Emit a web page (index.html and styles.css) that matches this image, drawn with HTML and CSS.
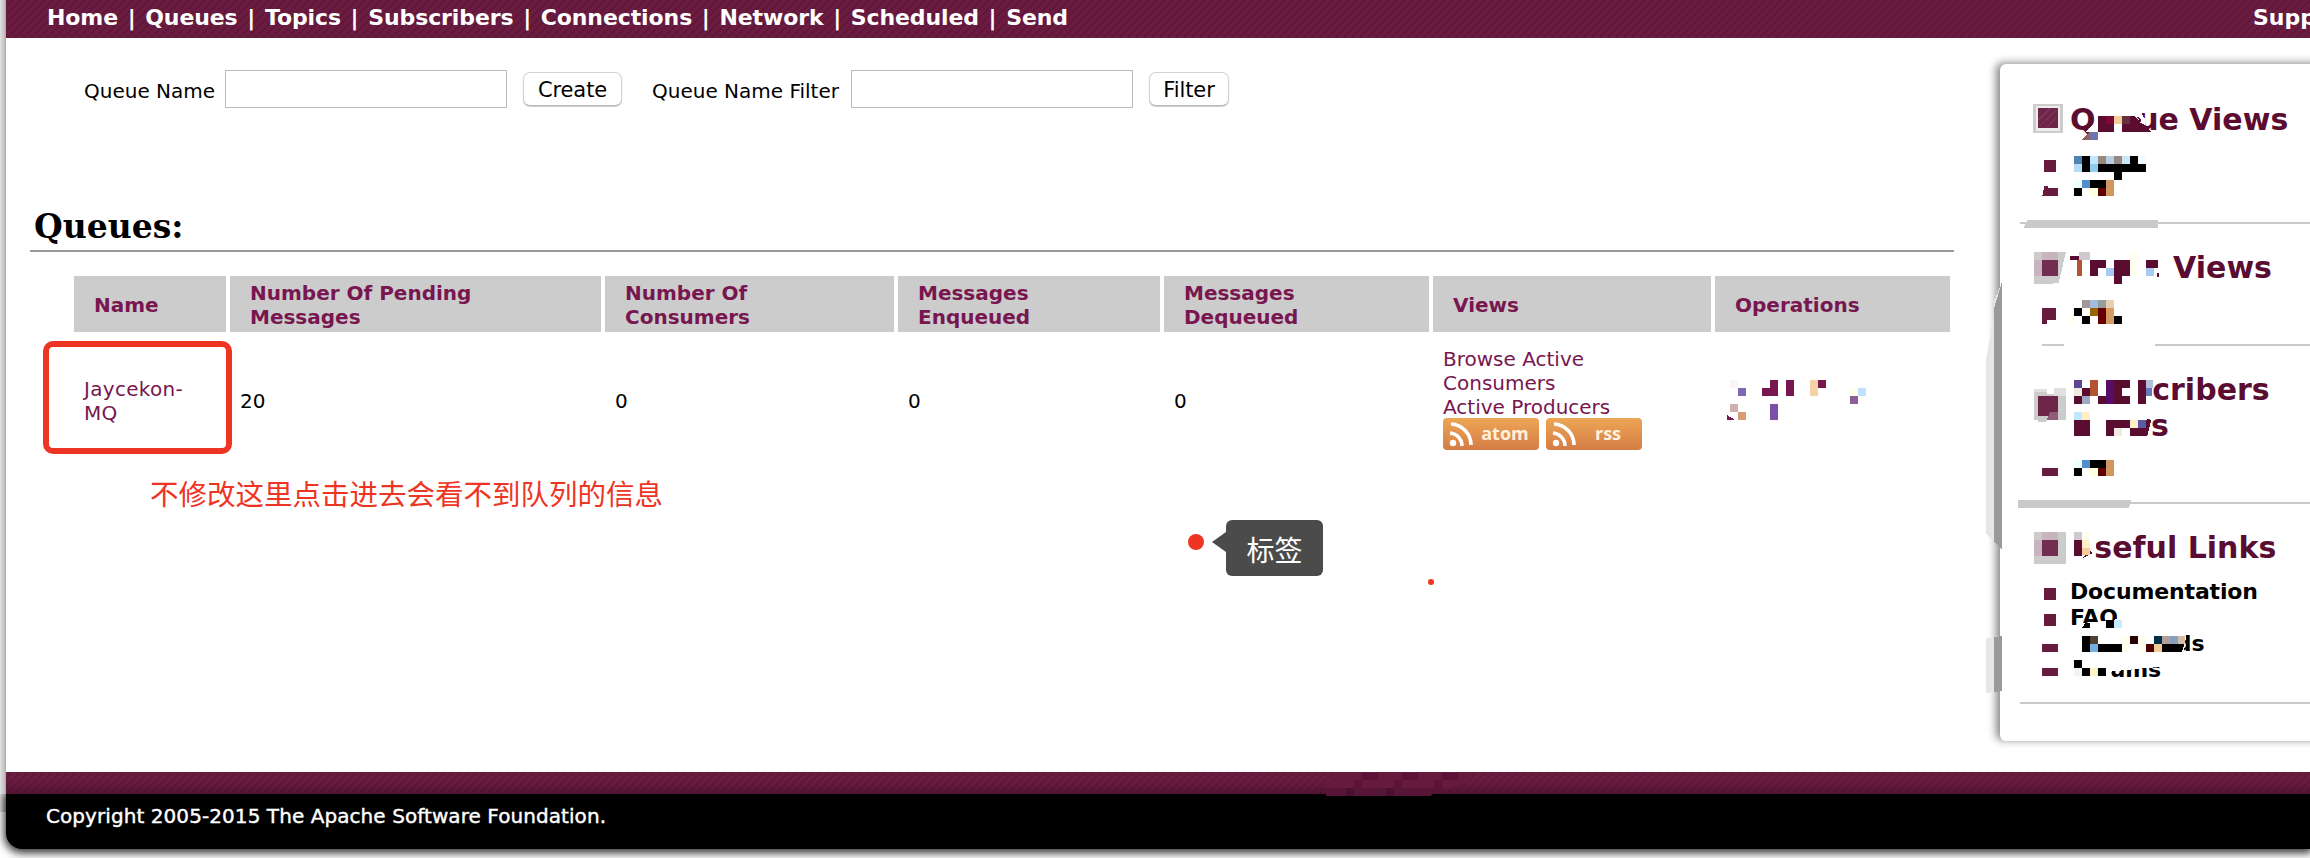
FILE: index.html
```html
<!DOCTYPE html>
<html lang="en">
<head>
  <meta charset="UTF-8" />
  <title>Queues</title>
  <link rel="stylesheet" href="styles.css">
</head>
<body>
  <div class="page">
    <div class="topbar stripes">
      <div class="nav"><a>Home</a> | <a>Queues</a> | <a>Topics</a> | <a>Subscribers</a> | <a>Connections</a> | <a>Network</a> | <a>Scheduled</a> | <a>Send</a></div>
      <div class="support">Support</div>
    </div>

    <div class="content">
      <div class="main">
        <div class="forms">
          <label class="lbl-name">Queue Name</label>
          <input type="text">
          <button class="btn-create">Create</button>
          <label class="lbl-filter">Queue Name Filter</label>
          <input type="text">
          <button class="btn-filter">Filter</button>
        </div>

        <h2>Queues:</h2>

        <div class="queues">
          <div class="th">Name</div>
          <div class="th">Number Of Pending<br>Messages</div>
          <div class="th">Number Of<br>Consumers</div>
          <div class="th">Messages<br>Enqueued</div>
          <div class="th">Messages<br>Dequeued</div>
          <div class="th">Views</div>
          <div class="th">Operations</div>

          <div class="td name"><a>Jaycekon-<br>MQ</a></div>
          <div class="td">20</div>
          <div class="td">0</div>
          <div class="td">0</div>
          <div class="td">0</div>
          <div class="td views">
            <a>Browse Active<br>Consumers</a><br><a>Active Producers</a>
            <div class="feeds">
              <span class="feed">
                <svg width="26" height="28" viewBox="0 0 26 28"><circle cx="5" cy="23" r="3.2" fill="#fff"/><path d="M2 13a13 13 0 0 1 12 13M3 4a21 21 0 0 1 20 21" fill="none" stroke="#fff" stroke-width="3.6"/></svg>
                <b>atom</b>
              </span>
              <span class="feed">
                <svg width="26" height="28" viewBox="0 0 26 28"><circle cx="5" cy="23" r="3.2" fill="#fff"/><path d="M2 13a13 13 0 0 1 12 13M3 4a21 21 0 0 1 20 21" fill="none" stroke="#fff" stroke-width="3.6"/></svg>
                <b>rss</b>
              </span>
            </div>
          </div>
          <div class="td ops">
            <svg width="140" height="40" viewBox="0 0 140 40" shape-rendering="crispEdges">
              <path fill="#7f67b8" d="M12 8h8v8h-8z"/>
              <path fill="#fbf5f3" d="M4 0h8v8h-8z"/>
              <path fill="#781650" d="M44 0h8v16h-16v-8h8zM60 0h8v16h-8zM92 0h8v8h-8zM1 35l8 5h-8z"/>
              <path fill="#f4d2a5" d="M84 0h8v16h-8z"/>
              <path fill="#fffff0" d="M124 8h8v8h-8z"/>
              <path fill="#bfe0ff" d="M132 8h8v8h-8z"/>
              <path fill="#8a5f96" d="M124 16h8v8h-8z"/>
              <path fill="#d0b0ad" d="M4 24h8v8h-8z"/>
              <path fill="#dc9a70" d="M12 32h8v8h-8z"/>
              <path fill="#7c50a8" d="M44 24h8v16h-8z"/>
            </svg>
          </div>
        </div>
      </div>

      <div class="side">
        <div class="box">
          <h3>Queue Views</h3>
          <ul><li></li><li></li></ul>
        </div>
        <div class="box topics">
          <h3>Topic Views</h3>
          <ul><li></li></ul>
        </div>
        <div class="box">
          <h3>Subscribers<br>Views</h3>
          <ul><li></li></ul>
        </div>
        <div class="box">
          <h3>Useful Links</h3>
          <ul>
            <li>Documentation</li>
            <li>FAQ</li>
            <li>Downloads</li>
            <li>Forums</li>
          </ul>
        </div>

        <!-- pixelated areas, one block is 24 units -->
        <svg class="mosaic" width="350" height="750" viewBox="0 0 1050 2250" shape-rendering="crispEdges">
          <g>
            <path fill="#ccc" d="M220 311h88v88h-88z"/><path fill="#ececec" d="M227 318h74v74h-74z"/>
            <path fill="#6d2549" d="M234 324h60v60h-60z"/>
            <path stroke="#7f3a5e" stroke-width="4" d="M236 360l36-36M236 382l56-56M260 382l32-32"/>
            <path fill="#fff" d="M412 318h118v78h42v30H390v-30h-14l36-36zM530 318l26 40v20h-26z"/>
            <path fill="#5a0c31" d="M414 360v36h48v-24h24v24h88l-50-48H414zM530 348l14 10v16z"/>
            <path fill="#fff" d="M462 372h24v24h-24z"/>
            <path fill="#7d0a33" d="M438 348h24v24h-24z"/><path fill="#f5cd9a" d="M462 348h24v24h-24z"/><path fill="#66303f" d="M486 348h24v24h-24z"/>
            <path fill="#96605e" d="M390 396v23h-24z"/><path fill="#6d76ae" d="M390 396h24v23h-24z"/>
            <path fill="#681b3f" d="M252 480h36v36h-36zM247 587l6-29h10v6h31v23z"/>
            <path fill="#4e83b3" d="M342 468h24v24h-24z"/><path fill="#b4daf4" d="M342 492h24v24h-24z"/>
            <path fill="#000" d="M366 468h24v48h-24zM414 492h96v-24h24v24h24v24h-72v24h-24v-24h-48zM342 564h24v24h-24zM390 540h48v24h-48z"/>
            <path fill="#bfe7ff" d="M390 468h24v24h-24z"/><path fill="#8eccf0" d="M390 492h24v24h-24z"/>
            <path fill="#978982" d="M414 468h24v24h-24zM462 468h24v24h-24z"/><path fill="#b5cce3" d="M438 468h24v24h-24z"/><path fill="#cae8fc" d="M486 468h24v24h-24z"/><path fill="#efffff" d="M534 468h24v24h-24zM342 540h24v24h-24z"/>
            <path fill="#4d91c6" d="M366 540h24v24h-24z"/><path fill="#ffffe0" d="M390 564h24v24h-24z"/><path fill="#5c0000" d="M414 564h24v24h-24z"/><path fill="#d2965c" d="M438 540h24v48h-24z"/>
            <path fill="#c9c9c9" d="M202 660h391v24H190z"/>
          </g>
          <g transform="translate(0 690)">
            <path fill="#ccc" d="M222 66h96l-22 92-26 4h-48z"/><path fill="#c8b4bd" d="M222 90h24v48h-24zM246 66h48v24h-48z"/><path fill="#732d50" d="M246 90h48v48h-48z"/>
            <path fill="#fff" d="M325 60h270v108H325z"/>
            <path fill="#5a0c31" d="M330 78h26v12h-26zM390 90h48v24h-24v24h-24zM462 90h48v48h-24v24h-24zM558 90h36v24h-36zM591 130h5v10h-5z"/>
            <path fill="#d0c9cf" d="M356 66h34v24h-34z"/><path fill="#b25432" d="M350 90h16v48h-16z"/><path fill="#a8caf3" d="M438 114h24v24h-24zM558 114h24v24h-24z"/><path fill="#fffff0" d="M510 66h24v72h-24z"/>
            <path fill="#681b3f" d="M246 234h42v36h-26v12h-16z"/>
            <path fill="#9f9798" d="M366 210h24v24h-24z"/><path fill="#a4bcdf" d="M390 210h24v24h-24z"/><path fill="#949e9b" d="M414 210h24v24h-24z"/><path fill="#e8cdb0" d="M438 210h24v24h-24z"/>
            <path fill="#000" d="M342 234h24v24h24v24h-24v-24h-24zM462 258h24v24h-24z"/><path fill="#966400" d="M390 234h24v24h-24z"/><path fill="#600" d="M414 234h24v48h-24z"/><path fill="#d69b60" d="M438 234h24v48h-24z"/><path fill="#fffff0" d="M330 258h12v24h-12z"/>
            <path fill="#fff" d="M175 338h72v14h-72zM312 338h273v14h-273z"/>
            <path fill="#ccc" d="M222 476h40v16h24v-18h32v96h-48v-8l-14 14h-22v-6h-12z"/><path fill="#e0e0e0" d="M222 476h40v10h-40zM282 474h36v24h-36z"/>
            <path fill="#6d2549" d="M234 498h60v60h-60z"/><path fill="#905d79" d="M270 546h24v24h-34z"/>
            <path fill="#fff" d="M325 435h250v98H325zM325 545h235v75H325z"/>
            <path fill="#5f4397" d="M342 450h24v24h-24z"/><path fill="#f1e9e2" d="M342 474h24v24h-24zM462 594h24v24h-24z"/><path fill="#b25432" d="M390 450h24v48h-24z"/><path fill="#9fa7c3" d="M366 498h24v24h-24z"/>
            <path fill="#5a0c31" d="M342 498h24v-24h24v24h-24v24h-24zM414 498h24v-48h72v24h-24v24h24v24h-96zM534 450h24v72h-24zM342 570h48v48h-48zM438 570h72v24h48v-24h16l-12 48h-52v-24h-48v24h-24z"/>
            <path fill="#580c69" d="M438 450h24v72h-24z"/><path fill="#b2bfdb" d="M558 450h20v24h-20z"/><path fill="#6679ba" d="M558 474h18v24h-18z"/>
            <path fill="#bfe9ff" d="M342 546h24v24h-24z"/><path fill="#fff0c8" d="M366 546h24v24h-24zM510 570h24v24h-24z"/><path fill="#5b5aa4" d="M534 570h24v24h-24z"/>
            <path fill="#681b3f" d="M246 714h48v24h-48z"/>
            <path fill="#000" d="M342 714h24v24h-24zM390 690h48v24h-48z"/><path fill="#efffff" d="M342 690h24v24h-24z"/><path fill="#4d91c6" d="M366 690h24v24h-24z"/><path fill="#ffffe0" d="M390 714h24v24h-24z"/><path fill="#5c0000" d="M414 714h24v24h-24z"/><path fill="#d2965c" d="M438 690h24v48h-24z"/>
          </g>
          <g transform="translate(0 1440)">
            <path fill="#c9c9c9" d="M174 60h341l-9 24H174z"/>
            <path fill="#ccc" d="M222 156h96v96h-96z"/><path fill="#c8b4bd" d="M222 180h24v48h-24zM246 156h48v24h-48z"/><path fill="#732d50" d="M246 180h48v48h-48z"/>
            <path fill="#fff" d="M325 150h75l8 50-10 40h-73z"/>
            <path fill="#d0c9cf" d="M342 156h24v24h-24z"/><path fill="#5a0c31" d="M342 180h24v48h-24zM366 236l26-24 4 8z"/><path fill="#fff0c8" d="M366 180h24v24h-24z"/><path fill="#f5cd9a" d="M366 204h24v20h-24z"/><path fill="#fffff0" d="M366 156h24v24h-24z"/>
            <path fill="#681b3f" d="M252 324h36v36h-36zM252 402h36v36h-36zM246 492h48v24h-48zM246 564h48v24h-48z"/>
            <path fill="#fff" d="M366 430l104-12 18 26H366zM325 455h335l18 15-10 60H325zM325 530h280v30l-150 14-20 30H325z"/>
            <path fill="#000" d="M366 443l10-14h14v14zM438 420h24v24h-24zM366 468h24v48h-24zM414 492h72v24h-72zM606 492h68l-8 24h-60zM342 540h24v24h24v24h-24v-24h-24zM414 564h24v24h-24z"/>
            <path fill="#c4ecff" d="M462 420h24v24h-24z"/><path fill="#4f402f" d="M390 468h24v24h-24z"/><path fill="#70b0e2" d="M390 492h24v24h-24z"/><path fill="#fffff0" d="M486 468h24v48h-24zM534 468h24v48h-24z"/><path fill="#2c0000" d="M510 468h24v24h-24z"/><path fill="#4e0000" d="M558 492h24v24h-24z"/><path fill="#003044" d="M582 468h24v24h-24z"/><path fill="#f3cb98" d="M582 492h24v24h-24z"/><path fill="#b1a09a" d="M606 468h24v24h-24z"/><path fill="#8a9fbc" d="M630 468h24v24h-24z"/><path fill="#d6bda5" d="M654 468h20v24h-20z"/><path fill="#f7f2ef" d="M342 564h24v24h-24z"/><path fill="#fff4c8" d="M390 564h24v24h-24z"/>
          </g>
          <path fill="#e6e6e6" d="M78 1080l24-130v-45l24-60v805l-48-50zM78 1916l48-8v164l-48 8z"/>
          <path fill="#9a9a9a" d="M102 925l24-80v805l-24-25zM102 1912l24-4v164l-24 5z"/>
        </svg>
      </div>
    </div>

    <div class="strip stripes">
      <svg class="patch" width="158" height="24" viewBox="0 0 158 24" shape-rendering="crispEdges">
        <path fill="#661b3e" d="M14 0h140l-26 16H0z"/><path fill="#571538" d="M2 16h116l-12 8H2z"/>
        <path fill="#5c1237" d="M38 1h16v7H38zM78 1h16v7H78zM118 1h16v7h-16zM30 8h8v8h-8zM70 8h8v8h-8zM110 8h8v8h-8z"/><path fill="#4b0f30" d="M22 16h8v8h-8zM62 16h8v8h-8z"/>
      </svg>
    </div>
    <div class="footer">Copyright 2005-2015 The Apache Software Foundation.</div>
  </div>

  <!-- annotations -->
  <div class="mark-box"></div>
  <div class="mark-text">不修改这里点击进去会看不到队列的信息</div>
  <div class="dot"></div>
  <div class="tip">标签</div>
  <div class="dot small"></div>
</body>
</html>
```

FILE: styles.css
```css
* {
  box-sizing: border-box;
}
body {
  margin: 0;
  height: 858px;
  padding-left: 6px;
  position: relative;
  overflow: hidden;
  font-family: Verdana, "DejaVu Sans", sans-serif;
  font-size: 20px;
  line-height: 24px;
  color: #000;
  background: #fff linear-gradient(to right, #e2e2e2, #c4c4c4 4px, #a8a8a8) no-repeat 0 0 / 6px 812px;
}
a {
  color: #781650;
}
.page {
  height: 849px;
}
.stripes {
  background: repeating-linear-gradient(135deg, #6a1c41 0, #681b3f 4px, #5a1236 4.7px, #681b3f 5.66px);
}
.topbar {
  height: 38px;
  display: flex;
  justify-content: space-between;
  padding-left: 41px;
  color: #fff;
  font-weight: bold;
  font-size: 22px;
  line-height: 36px;
  white-space: nowrap;
  overflow: hidden;
}
.topbar a {
  color: #fff;
}
.nav {
  letter-spacing: -0.1px;
  word-spacing: 2.1px;
}
.support {
  width: 57px;
}
.content {
  display: flex;
  height: 734px;
  background: #fff;
}
.main {
  width: 1948px;
  padding-left: 24px;
}
.forms {
  display: flex;
  align-items: center;
  height: 38px;
  margin: 32px 0 0 54px;
}
.forms label {
  white-space: nowrap;
  padding-top: 3px;
}
.lbl-name {
  width: 141px;
}
.lbl-filter {
  width: 199px;
  margin-left: 30px;
}
.forms input {
  width: 282px;
  height: 38px;
  border: 1px solid #bbb;
  background: #fff;
}
.forms button {
  height: 34px;
  margin-left: 16px;
  padding: 2px 0 0;
  font-family: inherit;
  font-size: 21px;
  letter-spacing: -0.1px;
  background: #fff;
  border: 1px solid #d2d2d2;
  border-bottom-color: #b8b8b8;
  border-radius: 7px;
  box-shadow: 0 1px 1px #ccc;
}
.btn-create {
  width: 99px;
}
.btn-filter {
  width: 80px;
}
h2 {
  width: 1924px;
  margin: 97px 0 24px;
  padding-left: 4px;
  height: 47px;
  border-bottom: 2px solid #999;
  font-family: "DejaVu Serif", serif;
  font-size: 33px;
  line-height: 44px;
}
.queues {
  display: grid;
  grid-template-columns: 152px 371px 289px 262px 265px 278px 235px;
  grid-template-rows: 56px 130px;
  column-gap: 4px;
  margin-left: 44px;
  width: 1876px;
}
.th {
  display: flex;
  align-items: center;
  padding: 2px 0 0 20px;
  background: #ccc;
  color: #781650;
  font-weight: bold;
}
.td {
  display: flex;
  align-items: center;
  padding: 8px 0 0 10px;
}
.td.name {
  letter-spacing: 0.3px;
}
.td.views {
  display: block;
  padding-top: 15px;
}
.td.ops {
  align-items: flex-start;
  padding: 48px 0 0 11px;
}
.feeds {
  display: flex;
  gap: 7px;
  margin-top: -1px;
}
.feed {
  display: flex;
  align-items: center;
  width: 96px;
  height: 32px;
  padding-left: 5px;
  border-radius: 4px;
  background: linear-gradient(#eda655, #d57c46);
}
.feed b {
  flex: 1;
  margin-bottom: 2px;
  padding-right: 3px;
  text-align: center;
  color: #fff0dc;
  font-family: "Open Sans", sans-serif;
  font-size: 18px;
}
.side {
  position: relative;
  width: 400px;
  flex-shrink: 0;
  height: 677px;
  margin: 26px 0 0 46px;
  padding: 12px 0 0 20px;
  border-radius: 6px;
  background: #fff;
  box-shadow: -4px -1px 9px 0 #888;
  clip-path: inset(-12px 0 -8px -14px);
}
.box {
  padding: 26px 0 19px 50px;
  border-bottom: 2px solid #c9c9c9;
}
.box h3 {
  margin: 0 0 13px;
  font-size: 30px;
  line-height: 36px;
  color: #5a0c31;
}
.topics h3 {
  word-spacing: 6px;
}
.box ul {
  margin: 0;
  padding: 0;
  list-style: none;
  font-size: 22px;
  font-weight: bold;
  letter-spacing: -0.15px;
}
.box li {
  height: 26px;
  line-height: 26px;
}
.mosaic {
  position: absolute;
  left: -40px;
  top: -64px;
}
.strip {
  position: relative;
  height: 22px;
}
.strip::after {
  content: "";
  position: absolute;
  inset: 0;
  background: linear-gradient(transparent 40%, rgba(30, 0, 20, 0.3));
}
.patch {
  position: absolute;
  z-index: 1;
  left: 1318px;
  top: 0;
}
.footer {
  height: 55px;
  padding-left: 40px;
  border-bottom-left-radius: 16px;
  background: #000;
  box-shadow: 0 2px 9px 2px #333;
  clip-path: inset(0 0 -9px -6px);
  color: #fff;
  line-height: 45px;
  letter-spacing: 0.07px;
  -webkit-text-stroke: 0.4px #fff;
}
.mark-box {
  position: absolute;
  left: 43px;
  top: 341px;
  width: 189px;
  height: 113px;
  border: 6px solid #ee3524;
  border-radius: 10px;
}
.mark-text {
  position: absolute;
  left: 150px;
  top: 473px;
  color: #ee3524;
  font: 28.5px/40px "Noto Sans CJK SC", sans-serif;
  white-space: nowrap;
}
.dot {
  position: absolute;
  left: 1188px;
  top: 534px;
  width: 16px;
  height: 16px;
  border-radius: 50%;
  background: #ee3524;
}
.dot.small {
  left: 1428px;
  top: 579px;
  width: 6px;
  height: 6px;
}
.tip {
  position: absolute;
  left: 1226px;
  top: 520px;
  width: 97px;
  height: 56px;
  border-radius: 6px;
  background: #4b4b4b;
  color: #fff;
  text-align: center;
  font: 28px/59px "Noto Sans CJK SC", sans-serif;
}
.tip::before {
  content: "";
  position: absolute;
  left: -14px;
  top: 12px;
  border: 10px solid transparent;
  border-right: 14px solid #4b4b4b;
  border-left: 0;
}
```
